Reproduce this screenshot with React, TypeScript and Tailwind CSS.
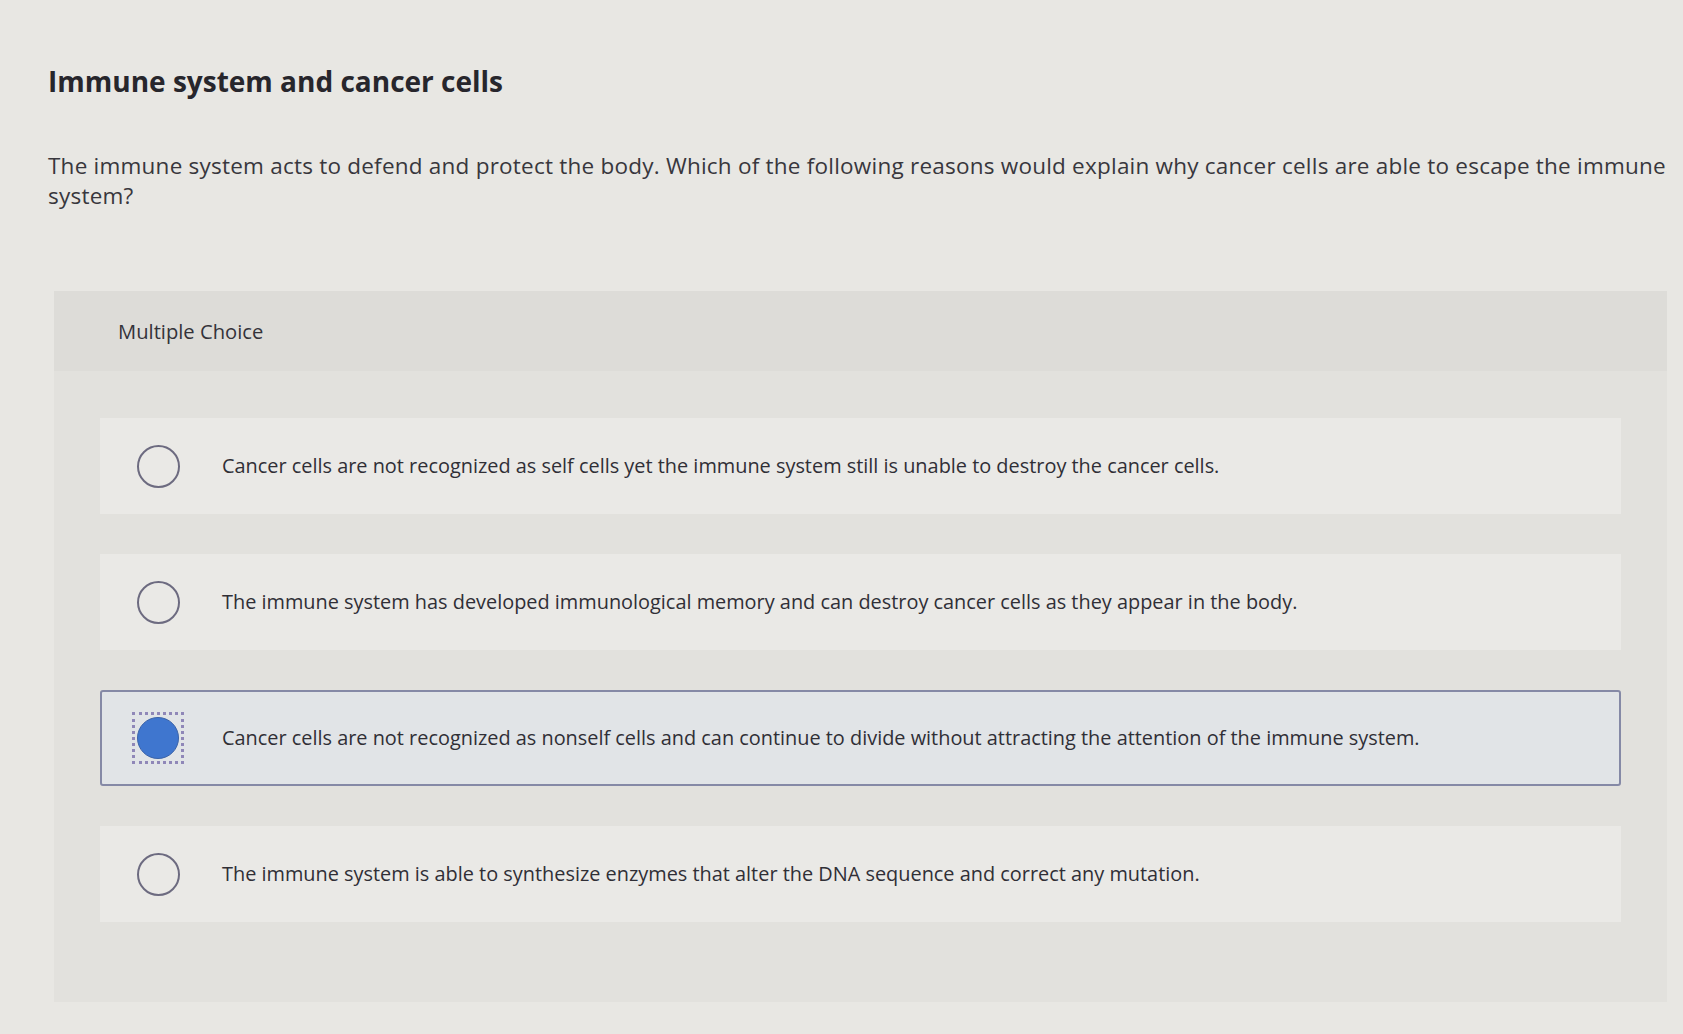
import React from 'react';

const options = [
    'Cancer cells are not recognized as self cells yet the immune system still is unable to destroy the cancer cells.',
    'The immune system has developed immunological memory and can destroy cancer cells as they appear in the body.',
    'Cancer cells are not recognized as nonself cells and can continue to divide without attracting the attention of the immune system.',
    'The immune system is able to synthesize enzymes that alter the DNA sequence and correct any mutation.',
];

const SELECTED = 2;

function Radio({ checked }: { checked: boolean }) {
    if (checked) {
        return (
            <div className="flex size-[52px] shrink-0 items-center justify-center border-[3px] border-dotted border-[#8f87b8]">
                <div className="size-[42px] rounded-full border border-[#3a62a8] bg-[#3f76cf]" />
            </div>
        );
    }
    return (
        <div className="flex size-[52px] shrink-0 items-center justify-center">
            <div className="size-[43px] rounded-full border-2 border-[#6d6b80]" />
        </div>
    );
}

export default function App() {
    return (
        <div
            className="min-h-[1034px] w-full bg-[#e8e7e3] text-[#2e2d33]"
            style={{ fontFamily: '"Open Sans", Lato, sans-serif' }}
        >
            <div className="pt-[63px] pr-[4px] pl-[48px]">
                <h1 className="text-[28px] leading-[36px] font-bold text-[#27262c]">
                    Immune system and cancer cells
                </h1>
                <p className="mt-[52px] text-[22.5px] leading-[30px] tracking-[0.01em] text-[#38373d]">
                    The immune system acts to defend and protect the body. Which of the following reasons would explain why cancer cells are able to escape the immune system?
                </p>
            </div>

            <div className="mt-[80px] mr-[16px] ml-[54px] bg-[#e2e1dd] pb-[80px]">
                <div className="flex h-[80px] items-center bg-[#dddcd8] px-[64px]">
                    <span className="text-[20.2px] text-[#34333a]">Multiple Choice</span>
                </div>
                <div className="mt-[47px] flex flex-col gap-[40px] px-[46px]">
                    {options.map((text, i) => {
                        const checked = i === SELECTED;
                        return (
                            <div
                                key={i}
                                className={
                                    checked
                                        ? 'flex h-[96px] items-center gap-[38px] rounded-[3px] border-2 border-[#8589a6] bg-[#e1e4e7] pl-[30px]'
                                        : 'flex h-[96px] items-center gap-[38px] border-2 border-transparent bg-[#eae9e6] pl-[30px]'
                                }
                            >
                                <Radio checked={checked} />
                                <span className="text-[19.9px] text-[#302f36]">{text}</span>
                            </div>
                        );
                    })}
                </div>
            </div>
        </div>
    );
}
